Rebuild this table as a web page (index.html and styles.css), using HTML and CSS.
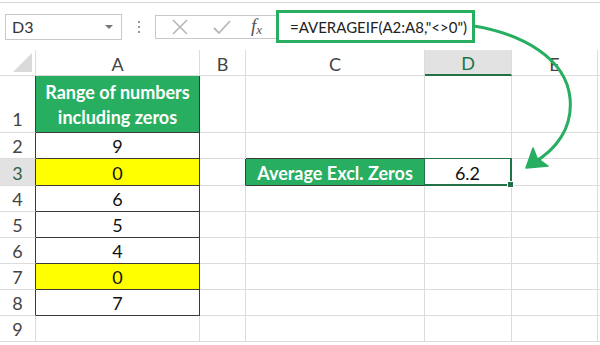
FILE: index.html
```html
<!DOCTYPE html>
<html>
<head>
<meta charset="utf-8">
<link rel="stylesheet" href="styles.css">
</head>
<body>
<div class="app">
  <div class="toolbar">
    <div class="namebox"><span>D3</span><span class="caret"></span></div>
    <div class="dots"><i></i><i></i><i></i></div>
    <div class="fxbox">
      <svg class="ic" width="20" height="20" viewBox="0 0 20 20"><path d="M3 3L17 17M17 3L3 17" stroke="#b8b8b8" stroke-width="1.6" fill="none"/></svg>
      <svg class="ic" width="20" height="20" viewBox="0 0 20 20"><path d="M2 11L7 16L18 4" stroke="#b8b8b8" stroke-width="1.8" fill="none"/></svg>
      <span class="fx">f<sub>x</sub></span>
    </div>
    <div class="formula">=AVERAGEIF(A2:A8,"&lt;&gt;0")</div>
  </div>
  <div class="sheet">
    <div class="corner"><span class="tri"></span></div>
    <div class="colh">A</div>
    <div class="colh">B</div>
    <div class="colh">C</div>
    <div class="colh sel">D</div>
    <div class="colh">E</div>
    <div class="colh last"></div>

    <div class="rowh dark tall">1</div>
    <div class="cell hdr">Range of numbers<br>including zeros</div>
    <div class="cell"></div><div class="cell"></div><div class="cell"></div><div class="cell"></div><div class="cell last"></div>

    <div class="rowh dark">2</div>
    <div class="cell boxed">9</div>
    <div class="cell"></div><div class="cell darkb"></div><div class="cell"></div><div class="cell"></div><div class="cell last"></div>

    <div class="rowh dark sel">3</div>
    <div class="cell boxed yellow">0</div>
    <div class="cell darkr"></div><div class="cell label">Average Excl. Zeros</div><div class="cell active">6.2</div><div class="cell"></div><div class="cell last"></div>

    <div class="rowh dark">4</div>
    <div class="cell boxed">6</div>
    <div class="cell"></div><div class="cell"></div><div class="cell"></div><div class="cell"></div><div class="cell last"></div>

    <div class="rowh dark">5</div>
    <div class="cell boxed">5</div>
    <div class="cell"></div><div class="cell"></div><div class="cell"></div><div class="cell"></div><div class="cell last"></div>

    <div class="rowh dark">6</div>
    <div class="cell boxed">4</div>
    <div class="cell"></div><div class="cell"></div><div class="cell"></div><div class="cell"></div><div class="cell last"></div>

    <div class="rowh dark">7</div>
    <div class="cell boxed yellow">0</div>
    <div class="cell"></div><div class="cell"></div><div class="cell"></div><div class="cell"></div><div class="cell last"></div>

    <div class="rowh dark">8</div>
    <div class="cell boxed">7</div>
    <div class="cell"></div><div class="cell"></div><div class="cell"></div><div class="cell"></div><div class="cell last"></div>

    <div class="rowh">9</div>
    <div class="cell"></div>
    <div class="cell"></div><div class="cell"></div><div class="cell"></div><div class="cell"></div><div class="cell last"></div>
  </div>
  <svg class="arrow" width="600" height="345" viewBox="0 0 600 345">
    <path d="M474 24 C522 32 566 56 570 96 C573 126 556 148 533 161" stroke="#27ae60" stroke-width="3" fill="none" stroke-linecap="round"/>
    <path d="M526 166 L533 146 L537 156 L548 164 Z" fill="#27ae60" stroke="#27ae60" stroke-width="1.5" stroke-linejoin="round"/>
  </svg>
</div>
</body>
</html>
```
FILE: styles.css
```css
html, body {
  margin: 0;
  padding: 0;
  background: #fff;
  overflow: hidden;
}
.app {
  position: relative;
  width: 600px;
  height: 345px;
  font-family: Lato, "Open Sans", sans-serif;
  color: #222;
}
.toolbar {
  height: 47px;
  margin-top: 2px;
  border-top: 1px solid #d6d6d6;
  display: flex;
  align-items: center;
}
.namebox {
  margin-left: 5px;
  height: 24px;
  border: 1px solid #c8c8c8;
  display: flex;
  align-items: center;
  justify-content: space-between;
  padding: 0 8px 0 6px;
  box-sizing: content-box;
  width: 101px;
  font-size: 16px;
  color: #333;
}
.caret {
  width: 0;
  height: 0;
  border-left: 4px solid transparent;
  border-right: 4px solid transparent;
  border-top: 4px solid #777;
}
.dots {
  width: 33px;
  display: flex;
  flex-direction: column;
  align-items: center;
  gap: 3px;
}
.dots i {
  display: block;
  width: 2px;
  height: 2px;
  background: #9a9a9a;
}
.fxbox {
  width: 121px;
  height: 24px;
  border: 1px solid #c8c8c8;
  border-right: none;
  display: flex;
  align-items: center;
  padding-left: 14px;
  gap: 22px;
  box-sizing: border-box;
}
.ic { display: block; }
.fx {
  font-family: "Liberation Serif", serif;
  font-style: italic;
  font-size: 19px;
  color: #555;
  margin-left: -3px;
}
.fx sub {
  font-size: 13px;
  vertical-align: -2px;
}
.formula {
  width: 199px;
  height: 33px;
  box-sizing: border-box;
  border: 3px solid #27ae60;
  display: flex;
  align-items: center;
  padding-left: 11px;
  font-size: 15px;
  white-space: nowrap;
  overflow: hidden;
  color: #222;
}
.sheet {
  display: grid;
  grid-template-columns: 36px 164px 46px 179px 87px 86px 2px;
  grid-template-rows: 26px 57px 26px 27px 26px 26px 26px 26px 26px 26px;
}
.sheet > div {
  box-sizing: border-box;
  border-right: 1px solid #dcdcdc;
  border-bottom: 1px solid #dcdcdc;
}
.sheet > .last { border-right: none; }
.corner {
  display: flex;
  align-items: flex-end;
  justify-content: flex-end;
  padding: 0 3px 3px 0;
}
.tri {
  width: 0;
  height: 0;
  border-left: 19px solid transparent;
  border-bottom: 19px solid #dadada;
}
.colh {
  display: flex;
  align-items: center;
  justify-content: center;
  font-size: 18px;
  color: #444;
  padding-top: 2px;
}
.colh.sel {
  background: #e2e2e2;
  color: #217346;
  border-bottom: 2px solid #217346 !important;
}
.rowh {
  display: flex;
  align-items: flex-end;
  justify-content: center;
  font-size: 18px;
  color: #444;
  padding-bottom: 1px;
}
.rowh.tall { padding-bottom: 2px; }
.sheet > .rowh.dark { border-right-color: #3a3a3a; }
.rowh.sel {
  background: #e2e2e2;
  color: #2f5f45;
}
.cell {
  display: flex;
  align-items: flex-end;
  justify-content: center;
  font-size: 18px;
  color: #111;
  padding-bottom: 1px;
}
.sheet > .boxed { border-right-color: #3a3a3a; border-bottom-color: #3a3a3a; }
.sheet > .hdr {
  background: #27ae60;
  color: #fff;
  font-weight: bold;
  text-align: center;
  line-height: 25px;
  padding-bottom: 2px;
  border-right-color: #3a3a3a;
  border-bottom-color: #3a3a3a;
}
.yellow { background: #ffff00; }
.sheet > .darkb { border-bottom-color: #3a3a3a; }
.sheet > .darkr { border-right-color: #3a3a3a; }
.sheet > .label {
  background: #27ae60;
  color: #fff;
  font-weight: bold;
  border-right-color: #3a3a3a;
  border-bottom-color: #3a3a3a;
}
.sheet > .active {
  position: relative;
  border: 2px solid #217346;
  border-left-width: 1px;
  border-top-width: 1px;
  margin: -1px 0 0 -1px;
  padding-bottom: 0;
}
.active::after {
  content: "";
  position: absolute;
  right: -4px;
  bottom: -4px;
  width: 5px;
  height: 5px;
  background: #217346;
  border: 1px solid #fff;
}
.arrow {
  position: absolute;
  left: 0;
  top: 0;
  pointer-events: none;
}
```
